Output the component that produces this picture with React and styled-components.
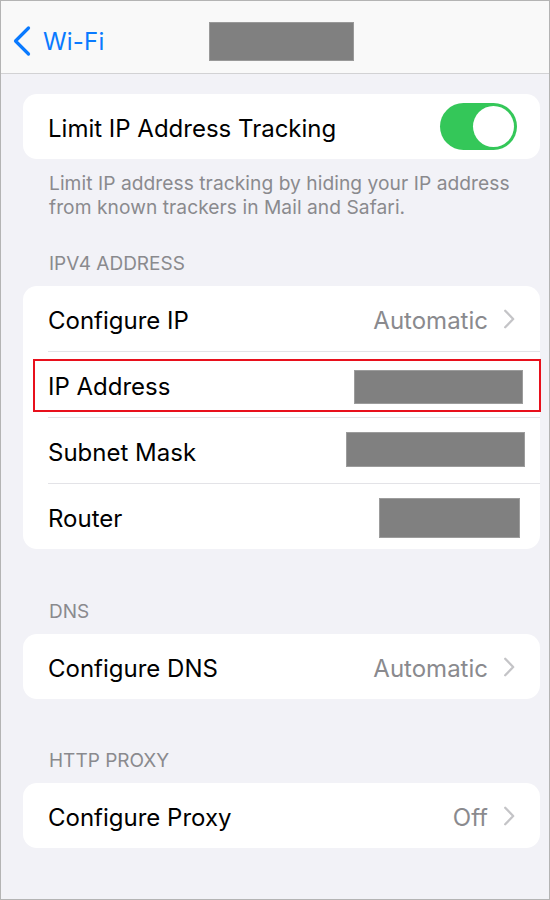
import React from 'react';
import styled, { createGlobalStyle } from 'styled-components';

const GlobalStyle = createGlobalStyle`
  html, body {
    margin: 0;
    padding: 0;
    background: #f2f2f7;
  }
  * {
    box-sizing: border-box;
  }
`;

const ipv4Rows = [
  { label: 'Configure IP', value: 'Automatic' },
  { label: 'IP Address', hidden: { w: 169, h: 34, r: 17, dy: 2 }, marked: true },
  { label: 'Subnet Mask', hidden: { w: 179, h: 35, r: 15, dy: -1 } },
  { label: 'Router', hidden: { w: 141, h: 40, r: 20, dy: 1 } },
];

const Chevron = () => (
  <ChevronSvg width="12" height="20" viewBox="0 0 12 20">
    <path d="M2.2 1.8 L10.2 10 L2.2 18.2" />
  </ChevronSvg>
);

const Row = ({ label, value, hidden, marked, link }) => (
  <RowWrap>
    <Label>{label}</Label>
    {value && <Value>{value}</Value>}
    {hidden && (
      <Hidden
        $w={hidden.w}
        $h={hidden.h}
        $r={hidden.r}
        $dy={hidden.dy}
      />
    )}
    {link && <Chevron />}
    {marked && <Marker />}
  </RowWrap>
);

const App = () => {
  return (
    <Frame>
      <GlobalStyle />
      <NavBar>
        <BackButton>
          <svg width="20" height="32" viewBox="0 0 20 32">
            <path
              d="M16.5 3 L3.5 16 L16.5 29"
              fill="none"
              stroke="#0a7aff"
              strokeWidth="3.2"
              strokeLinecap="round"
              strokeLinejoin="round"
            />
          </svg>
          <span>Wi-Fi</span>
        </BackButton>
        <TitleBlock />
      </NavBar>

      <Content>
        <Card>
          <RowWrap>
            <Label>Limit IP Address Tracking</Label>
            <Toggle>
              <Knob />
            </Toggle>
          </RowWrap>
        </Card>
        <Footer>
          Limit IP address tracking by hiding your IP address from known
          trackers in Mail and Safari.
        </Footer>

        <SectionTitle>IPv4 Address</SectionTitle>
        <Card>
          {ipv4Rows.map((row, i) => (
            <React.Fragment key={row.label}>
              {i > 0 && <Divider />}
              <Row {...row} link={!!row.value} />
            </React.Fragment>
          ))}
        </Card>

        <SectionTitle $gap={52}>DNS</SectionTitle>
        <Card>
          <Row label="Configure DNS" value="Automatic" link />
        </Card>

        <SectionTitle $gap={51}>HTTP Proxy</SectionTitle>
        <Card>
          <Row label="Configure Proxy" value="Off" link />
        </Card>
      </Content>
    </Frame>
  );
};

const Frame = styled.div`
  width: 550px;
  height: 900px;
  border: 1px solid #b4b4b4;
  background: #f2f2f7;
  overflow: hidden;
  font-family: Inter, 'Liberation Sans', sans-serif;
`;

const NavBar = styled.div`
  height: 73px;
  display: flex;
  align-items: center;
  padding: 8px 0 0 11px;
  background: #f9f9f9;
  border-bottom: 1px solid #d2d2d4;
`;

const BackButton = styled.div`
  display: flex;
  align-items: center;
  gap: 11px;
  color: #0a7aff;
  font-size: 24px;
  letter-spacing: 0.2px;
`;

const TitleBlock = styled.div`
  width: 145px;
  height: 39px;
  margin-left: 105px;
  background: #808080;
  border: 1px solid #999;
`;

const Content = styled.div`
  padding: 20px 9px 0 22px;
`;

const Card = styled.div`
  background: #fff;
  border-radius: 14px;
`;

const RowWrap = styled.div`
  position: relative;
  height: 65px;
  display: flex;
  align-items: center;
  padding: 0 24px 0 25px;
`;

const Label = styled.div`
  flex: 1;
  padding-top: 3px;
  color: #000;
  font-size: 24px;
`;

const Value = styled.div`
  padding-top: 3px;
  color: #8a8a8e;
  font-size: 24px;
  margin-right: 15px;
`;

const ChevronSvg = styled.svg`
  margin-right: 1px;
  path {
    fill: none;
    stroke: #c4c4c7;
    stroke-width: 2.3;
    stroke-linecap: round;
    stroke-linejoin: round;
  }
`;

const Hidden = styled.div`
  width: ${(p) => p.$w}px;
  height: ${(p) => p.$h}px;
  margin-right: ${(p) => p.$r - 24}px;
  transform: translateY(${(p) => p.$dy}px);
  background: #808080;
  border: 1px solid #9c9c9c;
`;

const Marker = styled.div`
  position: absolute;
  top: 7px;
  bottom: 5px;
  left: 10px;
  right: -1px;
  border: 2px solid #e8101c;
  pointer-events: none;
`;

const Divider = styled.div`
  height: 1px;
  margin-left: 25px;
  background: #e3e3e7;
`;

const Toggle = styled.div`
  width: 77px;
  height: 47px;
  border-radius: 24px;
  background: #34c759;
  display: flex;
  align-items: center;
  justify-content: flex-end;
  padding: 3px;
  margin-right: -1px;
`;

const Knob = styled.div`
  width: 41px;
  height: 41px;
  border-radius: 50%;
  background: #fff;
`;

const Footer = styled.p`
  margin: 12px 0 0;
  padding: 0 16px 0 26px;
  color: #8a8a8e;
  font-size: 19.2px;
  line-height: 24px;
  letter-spacing: 0.05px;
`;

const SectionTitle = styled.div`
  margin: ${(p) => p.$gap || 34}px 0 11px;
  padding-left: 26px;
  color: #8a8a8e;
  font-size: 19px;
  line-height: 22px;
  text-transform: uppercase;
`;

export default App;
